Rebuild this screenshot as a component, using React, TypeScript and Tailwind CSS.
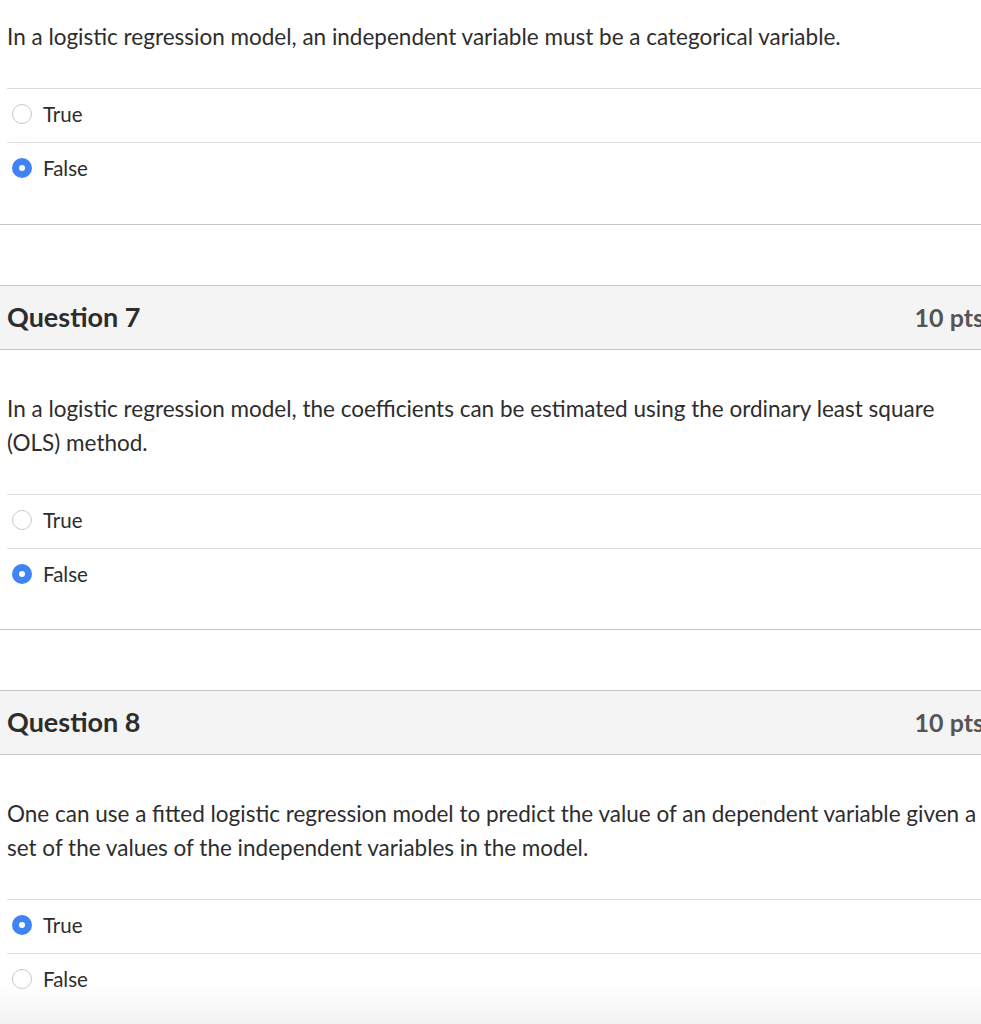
import React from "react";

const font = { fontFamily: "Lato, 'Noto Sans', sans-serif" };

function Radio({ checked }: { checked: boolean }) {
  return checked ? (
    <span className="flex h-[20px] w-[20px] shrink-0 items-center justify-center rounded-full bg-[#3f83f4]">
      <span className="h-[6px] w-[6px] rounded-full bg-white" />
    </span>
  ) : (
    <span className="h-[20px] w-[20px] shrink-0 rounded-full border border-[#c8c8c8] bg-white" />
  );
}

function Answer({ label, checked }: { label: string; checked: boolean }) {
  return (
    <div className="ml-[7px] flex h-[54px] items-center gap-[11px] border-t border-[#dcdcdc] pb-[3px] pl-[5px]">
      <Radio checked={checked} />
      <span className="-mt-[1px] text-[20.5px] leading-[24px] text-[#2d2d2d]">{label}</span>
    </div>
  );
}

function Header({ n }: { n: number }) {
  return (
    <div className="mt-[60px] flex h-[65px] items-center justify-between border-y border-[#c4c4c4] bg-[#f4f4f4] pl-[7px] pr-[6px]">
      <span className="text-[27px] font-bold text-[#2d2d2d]">Question {n}</span>
      <span className="text-[25px] font-bold text-[#555555]">10 pts</span>
    </div>
  );
}

function Body({
  text,
  answers,
  first,
}: {
  text: string;
  answers: [string, boolean][];
  first?: boolean;
}) {
  return (
    <div className={`border-b border-[#c4c4c4] ${first ? "pb-[28px]" : "pb-[27px]"}`}>
      <p
        className={`${first ? "pt-[20px]" : "pt-[42px]"} pl-[7px] pr-[10px] text-[22.5px] leading-[34px] text-[#2d2d2d]`}
      >
        {text}
      </p>
      <div className="mt-[34px]">
        {answers.map(([l, c]) => (
          <Answer key={l} label={l} checked={c} />
        ))}
      </div>
    </div>
  );
}

export default function App() {
  return (
    <div className="relative h-[1024px] w-[981px] overflow-hidden bg-white" style={font}>
      <div className="w-[990px]">
        <Body
          first
          text="In a logistic regression model, an independent variable must be a categorical variable."
          answers={[
            ["True", false],
            ["False", true],
          ]}
        />
        <Header n={7} />
        <Body
          text="In a logistic regression model, the coefficients can be estimated using the ordinary least square (OLS) method."
          answers={[
            ["True", false],
            ["False", true],
          ]}
        />
        <Header n={8} />
        <Body
          text="One can use a fitted logistic regression model to predict the value of an dependent variable given a set of the values of the independent variables in the model."
          answers={[
            ["True", true],
            ["False", false],
          ]}
        />
      </div>
      <div className="absolute bottom-0 left-0 h-[40px] w-full bg-gradient-to-b from-white/0 to-[#f3f3f3]" />
    </div>
  );
}
